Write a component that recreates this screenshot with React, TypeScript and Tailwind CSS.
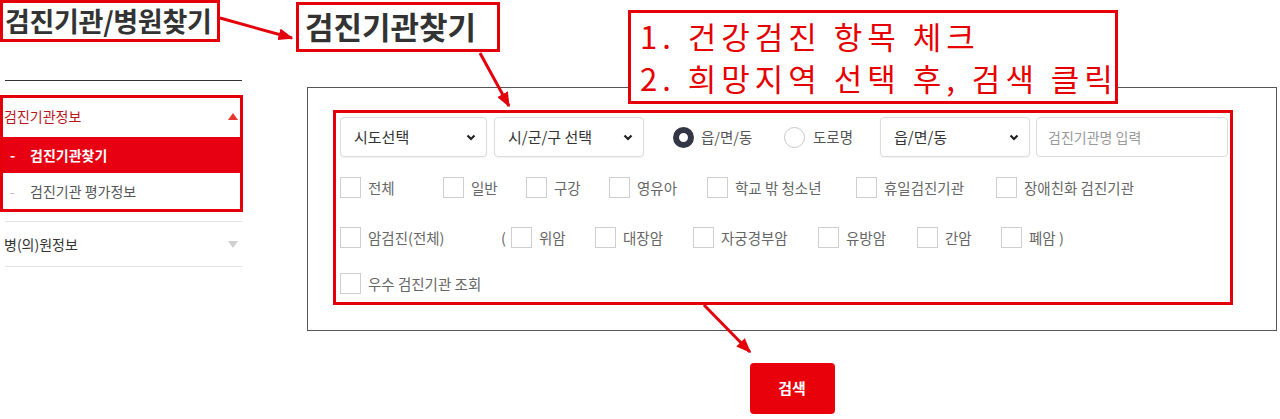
import React from "react";

const RED = "border-[#e3000b]";

function Chevron() {
  return (
    <svg width="10" height="7" viewBox="0 0 10 7" className="shrink-0">
      <polyline points="1.5,1.5 5,5 8.5,1.5" fill="none" stroke="#222" strokeWidth="2.2" />
    </svg>
  );
}

function SelectBox({ label, width }: { label: string; width: string }) {
  return (
    <div
      className={`flex items-center justify-between h-[40px] ${width} pl-[13px] pr-[10px] border border-[#dcdcdc] rounded-[4px] bg-white text-[15px] text-[#333] shadow-[0_1px_2px_rgba(0,0,0,0.06)]`}
    >
      <span>{label}</span>
      <Chevron />
    </div>
  );
}

function Check({ label, className = "" }: { label: string; className?: string }) {
  return (
    <div className={`flex items-center gap-[7px] shrink-0 ${className}`}>
      <span className="block w-[21px] h-[21px] border border-[#cfcfcf] bg-white shrink-0" />
      <span className="text-[14.5px] text-[#666] whitespace-nowrap">{label}</span>
    </div>
  );
}

export default function App() {
  return (
    <div className="relative w-[1280px] h-[419px] overflow-hidden bg-white font-['Noto_Sans_CJK_KR',sans-serif]">
      <div className="flex items-start">
        {/* sidebar */}
        <div className="w-[243px] shrink-0">
          <div className={`w-[220px] h-[42px] border-[3px] ${RED} pl-[2px] text-[27px] font-bold leading-[35px] text-[#333] whitespace-nowrap tracking-[-0.3px] overflow-hidden`}>
            검진기관/병원찾기
          </div>
          <div className="mt-[38px] ml-[5px] w-[237px] border-t border-[#333]" />
          <div className="mt-[14px]">
            <div className="flex items-center justify-between h-[42px] pl-[4px] pr-[5px] text-[14px] text-[#b8141c]">
              <span>검진기관정보</span>
              <span className="block w-0 h-0 border-x-[5px] border-x-transparent border-b-[7px] border-b-[#e8352c]" />
            </div>
            <div className="flex items-center h-[36px] pl-[10px] bg-[#e60012] text-[14px] font-bold text-white">
              <span className="w-[20px]">-</span>
              <span>검진기관찾기</span>
            </div>
            <div className="flex items-center h-[36px] pl-[10px] text-[14px] text-[#555]">
              <span className="w-[20px] text-[#bbb]">-</span>
              <span>검진기관 평가정보</span>
            </div>
          </div>
          <div className="mt-[12px] ml-[5px] w-[237px] border-t border-[#e2e2e2]" />
          <div className="flex items-center justify-between h-[44px] pl-[4px] pr-[5px] text-[14px] text-[#333]">
            <span>병(의)원정보</span>
            <span className="block w-0 h-0 border-x-[5px] border-x-transparent border-t-[7px] border-t-[#d0d0d0]" />
          </div>
          <div className="ml-[5px] w-[237px] border-t border-[#e2e2e2]" />
        </div>

        {/* main */}
        <div className="ml-[53px]">
          <div className={`mt-[2px] w-[204px] h-[50px] border-[3px] ${RED} pl-[6px] text-[31px] font-bold leading-[42px] text-[#333] whitespace-nowrap`}>
            검진기관찾기
          </div>
          <div className="mt-[35px] ml-[11px] w-[970px] h-[244px] border border-[#555] pt-[29px] pl-[32px]">
            <div className="flex items-center">
              <SelectBox label="시도선택" width="w-[147px]" />
              <div className="ml-[7px]">
                <SelectBox label="시/군/구 선택" width="w-[150px]" />
              </div>
              <div className="ml-[29px] w-[111px] flex items-center gap-[7px]">
                <span className="block w-[21px] h-[21px] rounded-full border-[6px] border-[#333645] bg-white" />
                <span className="text-[14.5px] text-[#555]">읍/면/동</span>
              </div>
              <div className="w-[96px] flex items-center gap-[8px]">
                <span className="block w-[21px] h-[21px] rounded-full border border-[#c8c8c8] bg-white" />
                <span className="text-[14.5px] text-[#555]">도로명</span>
              </div>
              <SelectBox label="읍/면/동" width="w-[150px]" />
              <div className="ml-[6px] flex items-center h-[40px] w-[192px] pl-[11px] border border-[#dcdcdc] rounded-[4px] text-[14px] text-[#999]">
                검진기관명 입력
              </div>
            </div>

            <div className="mt-[20px] flex items-center">
              <Check label="전체" className="w-[103px]" />
              <Check label="일반" className="w-[83px]" />
              <Check label="구강" className="w-[83px]" />
              <Check label="영유아" className="w-[98px]" />
              <Check label="학교 밖 청소년" className="w-[149px]" />
              <Check label="휴일검진기관" className="w-[140px]" />
              <Check label="장애친화 검진기관" />
            </div>

            <div className="mt-[28px] flex items-center">
              <Check label="암검진(전체)" className="w-[161px]" />
              <span className="w-[10px] text-[14.5px] text-[#666]">(</span>
              <Check label="위암" className="w-[84px]" />
              <Check label="대장암" className="w-[98px]" />
              <Check label="자궁경부암" className="w-[125px]" />
              <Check label="유방암" className="w-[99px]" />
              <Check label="간암" className="w-[84px]" />
              <Check label="폐암 )" />
            </div>

            <div className="mt-[24px] flex items-center">
              <Check label="우수 검진기관 조회" />
            </div>
          </div>
          <div className="ml-[11px] w-[970px] flex justify-center mt-[32px]">
            <button className="w-[85px] h-[51px] rounded-[4px] bg-[#e8000b] text-[15px] font-bold text-white">
              검색
            </button>
          </div>
        </div>
      </div>

      {/* annotations */}
      <div className={`absolute left-0 top-[95px] w-[243px] h-[117px] border-[3px] ${RED}`} />
      <div className={`absolute left-[333px] top-[110px] w-[900px] h-[195px] border-[3px] ${RED}`} />
      <div className={`absolute left-[628px] top-[10px] w-[490px] h-[94px] border-[3px] ${RED} bg-white pl-[9px] pt-[2px] text-[31px] leading-[42px] text-[#e60000] tracking-[5px] whitespace-nowrap overflow-hidden`}>
        <div>1. 건강검진 항목 체크</div>
        <div>2. 희망지역 선택 후, 검색 클릭</div>
      </div>

      <svg className="absolute inset-0 pointer-events-none" width="1280" height="419">
        <defs>
          <marker id="ah" markerWidth="5" markerHeight="4" refX="4.5" refY="2" orient="auto" markerUnits="strokeWidth">
            <polygon points="0,0 5,2 0,4" fill="#e3000b" />
          </marker>
        </defs>
        <line x1="220" y1="18" x2="292" y2="38" stroke="#e3000b" strokeWidth="3" markerEnd="url(#ah)" />
        <line x1="480" y1="53" x2="509" y2="106" stroke="#e3000b" strokeWidth="3" markerEnd="url(#ah)" />
        <line x1="704" y1="305" x2="750" y2="352" stroke="#e3000b" strokeWidth="3" markerEnd="url(#ah)" />
      </svg>
    </div>
  );
}
